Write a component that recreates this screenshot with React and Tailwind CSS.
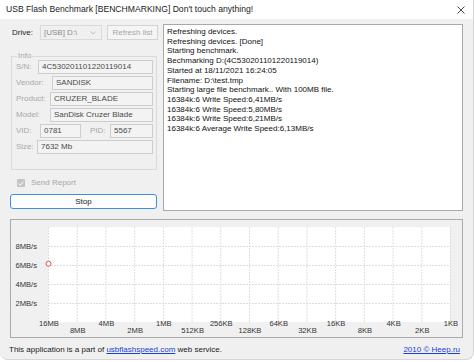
import React from 'react';

const logLines = [
  'Refreshing devices.',
  'Refreshing devices. [Done]',
  'Starting benchmark.',
  'Bechmarking D:(4C530201101220119014)',
  'Started at 18/11/2021 16:24:05',
  'Filename: D:\\test.tmp',
  'Starting large file benchmark.. With 100MB file.',
  '16384k:6 Write Speed:6,41MB/s',
  '16384k:6 Write Speed:5,80MB/s',
  '16384k:6 Write Speed:6,21MB/s',
  '16384k:6 Average Write Speed:6,13MB/s',
];

const sizes = ['16MB', '8MB', '4MB', '2MB', '1MB', '512KB', '256KB', '128KB', '64KB', '32KB', '16KB', '8KB', '4KB', '2KB', '1KB'];

function Field({ label, labelWidth, value }) {
  return (
    <div className="flex h-[14px] items-center">
      <span className="shrink-0 text-[#a8a8a8]" style={{ width: labelWidth }}>{label}</span>
      <div className="flex h-full flex-1 items-center border border-[#cdcdcd] bg-[#f3f3f3] pl-[3px] text-[#4a4a4a]">{value}</div>
    </div>
  );
}

function Chart() {
  const left = 37;
  const right = 439;
  const top = 7;
  const bottom = 102;
  const step = (right - left) / 14;
  const mb = (bottom - top) / 10;
  return (
    <svg width="451" height="117" className="block">
      <rect x={left} y={top} width={right - left} height={bottom - top} fill="#ffffff" />
      {sizes.map((s, i) => (
        <line key={'v' + i} x1={left + i * step + 0.5} x2={left + i * step + 0.5} y1={top} y2={bottom} stroke="#dedede" strokeDasharray="2 1" />
      ))}
      {[2, 4, 6, 8].map((v) => (
        <line key={'h' + v} x1={left} x2={right} y1={Math.round(bottom - v * mb) + 0.5} y2={Math.round(bottom - v * mb) + 0.5} stroke="#dedede" strokeDasharray="2 1" />
      ))}
      {[2, 4, 6, 8].map((v) => (
        <text key={'l' + v} x="26" y={bottom - v * mb + 3} textAnchor="end" fontSize="7.6" fill="#333" fontFamily="'Liberation Sans', Arial, sans-serif">{v}MB/s</text>
      ))}
      {sizes.map((s, i) => (
        <text key={'x' + i} x={left + i * step + 1} y={i % 2 === 0 ? 106 : 113} textAnchor="middle" fontSize="7.6" fill="#333" fontFamily="'Liberation Sans', Arial, sans-serif">{s}</text>
      ))}
      <circle cx={left + 0.5} cy={bottom - 6.13 * mb} r="2.5" fill="#fff" stroke="#e05050" strokeWidth="1" />
    </svg>
  );
}

export default function App() {
  return (
    <div className="h-[362px] w-[474px] bg-white font-['Liberation_Sans',Arial,sans-serif] text-[8px] leading-none text-[#1a1a1a]">
      <div className="flex h-[360px] flex-col overflow-hidden rounded-b-[8px] border-b border-r border-[#d6d6d6] bg-[#f0f0f0]">
        <div className="flex h-[19px] shrink-0 items-center justify-between bg-white pl-[6px] pr-[8px]">
          <span className="text-[8.6px] text-[#1a1a1a]">USB Flash Benchmark [BENCHMARKING] Don't touch anything!</span>
          <svg width="8" height="8" viewBox="0 0 8 8">
            <path d="M0.5 0.5 L7.5 7.5 M7.5 0.5 L0.5 7.5" stroke="#333" strokeWidth="0.9" />
          </svg>
        </div>

        <div className="flex flex-col px-[10px] pt-[5px]">
          <div className="flex items-start">
            <div className="flex w-[148px] flex-col">
              <div className="mt-[1px] flex h-[15px] items-center">
                <span className="w-[30px] pl-[2px] text-[#222]">Drive:</span>
                <div className="flex h-full w-[62px] items-center justify-between border border-[#dadada] bg-[#f0f0f0] pl-[3px] pr-[5px] text-[#8c8c8c]">
                  <span>[USB] D:\</span>
                  <svg width="6" height="4" viewBox="0 0 6 4">
                    <path d="M0.5 0.5 L3 3 L5.5 0.5" fill="none" stroke="#b0b0b0" strokeWidth="0.8" />
                  </svg>
                </div>
                <div className="ml-[5px] flex h-full flex-1 items-center justify-center border border-[#d4d4d4] bg-[#f5f5f5] text-[#a6a6a6]">Refresh list</div>
              </div>

              <fieldset className="ml-[1px] mt-[12px] w-[146px] border border-[#d9d9d9] pb-[15px] pl-[4px] pr-[3px]">
                <legend className="ml-[1px] px-[1px] leading-[8px] text-[#a8a8a8]">Info</legend>
                <div className="flex flex-col gap-[2px]">
                  <Field label="S/N:" labelWidth={22} value="4C530201101220119014" />
                  <Field label="Vendor:" labelWidth={36} value="SANDISK" />
                  <Field label="Product:" labelWidth={34} value="CRUZER_BLADE" />
                  <Field label="Model:" labelWidth={34} value="SanDisk Cruzer Blade" />
                  <div className="flex h-[14px] items-center">
                    <span className="w-[24px] shrink-0 text-[#a8a8a8]">VID:</span>
                    <div className="flex h-full w-[41px] items-center border border-[#cdcdcd] bg-[#f3f3f3] pl-[3px] text-[#4a4a4a]">0781</div>
                    <span className="ml-[9px] w-[20px] shrink-0 text-[#a8a8a8]">PID:</span>
                    <div className="flex h-full flex-1 items-center border border-[#cdcdcd] bg-[#f3f3f3] pl-[3px] text-[#4a4a4a]">5567</div>
                  </div>
                  <Field label="Size:" labelWidth={21} value="7632 Mb" />
                </div>
              </fieldset>

              <div className="ml-[7px] mt-[8px] flex h-[10px] items-center gap-[6px]">
                <div className="flex h-[8px] w-[8px] items-center justify-center rounded-[1px] bg-[#c4c4c4]">
                  <svg width="6" height="5" viewBox="0 0 6 5">
                    <path d="M0.6 2.6 L2.3 4.2 L5.4 0.8" fill="none" stroke="#fff" strokeWidth="1" />
                  </svg>
                </div>
                <span className="text-[#a6a6a6]">Send Report</span>
              </div>

              <div className="mt-[6px] flex h-[15px] w-[147px] items-center justify-center rounded-[3px] border border-[#3d8ee0] bg-[#fdfdfd] text-[#1a1a1a]">Stop</div>
            </div>

            <div className="ml-[5px] h-[187px] flex-1 border border-[#a9a9a9] bg-white pl-[3px] pt-[2px] leading-[9.7px] text-[#111]">
              {logLines.map((l, i) => (
                <div key={i} className="whitespace-pre">{l}</div>
              ))}
            </div>
          </div>

          <div className="mt-[8px] h-[119px] w-[453px] border border-[#ababab] bg-[#f0f0f0]">
            <Chart />
          </div>

          <div className="-ml-[1px] mr-[3px] mt-[7px] flex h-[10px] items-center justify-between text-[#1a1a1a]">
            <span>
              This application is a part of <span className="text-[#1a3fd6] underline">usbflashspeed.com</span> web service.
            </span>
            <span className="text-[#1a3fd6] underline">2010 © Heep.ru</span>
          </div>
        </div>
      </div>
    </div>
  );
}
